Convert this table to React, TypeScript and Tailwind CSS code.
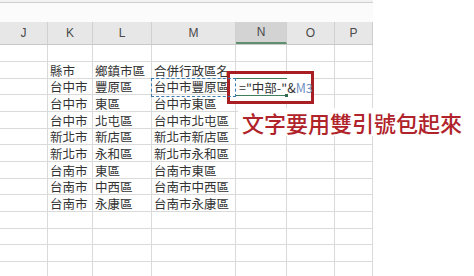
const cols = ["J", "K", "L", "M", "N", "O", "P"];
const colW = ["w-[48px]", "w-[45px]", "w-[59px]", "w-[84px]", "w-[51px]", "w-[48px]", "w-[38px]"];

const data: [string, string, string][] = [
  ["", "", ""],
  ["縣市", "鄉鎮市區", "合併行政區名"],
  ["台中市", "豐原區", "台中市豐原區"],
  ["台中市", "東區", "台中市東區"],
  ["台中市", "北屯區", "台中市北屯區"],
  ["新北市", "新店區", "新北市新店區"],
  ["新北市", "永和區", "新北市永和區"],
  ["台南市", "東區", "台南市東區"],
  ["台南市", "中西區", "台南市中西區"],
  ["台南市", "永康區", "台南市永康區"],
  ["", "", ""],
  ["", "", ""],
  ["", "", ""],
  ["", "", ""],
];

function Row({ cells, index }: { cells: [string, string, string]; index: number }) {
  const h = index % 3 === 2 ? "h-[16px]" : "h-[17px]";
  const values = ["", cells[0], cells[1], cells[2], "", "", ""];
  return (
    <div className={`flex ${h}`}>
      {values.map((v, i) => (
        <div
          key={i}
          className={`${colW[i]} shrink-0 flex items-end border-b border-r border-[#dadada] pl-[2px] text-[12.5px] leading-[15px] whitespace-nowrap text-[#333]`}
        >
          {v}
        </div>
      ))}
    </div>
  );
}

export default function App() {
  return (
    <div className="relative w-[474px] h-[276px] overflow-hidden bg-white font-['Noto_Sans_CJK_TC',sans-serif]">
      {/* top strip */}
      <div className="w-[373px] h-[2px] bg-[#f2f2f2]" />
      <div className="w-[373px] h-[1px] bg-[#cfcfcf]" />
      <div className="w-[373px] h-[19px] bg-[#fbfbfb]" />

      {/* column headers */}
      <div className="flex h-[23px] w-[373px] bg-[#e7e7e7] border-b border-[#c8c8c8] font-['Liberation_Sans',sans-serif] text-[12px] text-[#4a4a4a]">
        {cols.map((c, i) => (
          <div
            key={c}
            className={`${colW[i]} shrink-0 flex items-center justify-center border-r border-[#d0d0d0] ${
              c === "N" ? "bg-[#d3d3d3] border-b-2 border-b-[#5f8f6f]" : ""
            }`}
          >
            {c}
          </div>
        ))}
      </div>

      {/* grid */}
      <div className="w-[373px]">
        {data.map((r, i) => (
          <Row key={i} cells={r} index={i} />
        ))}
      </div>

      {/* red highlight box around formula */}
      <div className="absolute left-[227px] top-[71px] w-[87px] h-[33px] border-[3px] border-[#a81e22] bg-white" />

      {/* copy marquee on M3 */}
      <div className="absolute left-[151px] top-[78px] w-[85px] h-[19px] border border-dashed border-[#3b7bb0]" />

      {/* active cell edit lines */}
      <div className="absolute left-[236px] top-[78px] w-[51px] h-[18px] border-y border-[#3f7d5c]" />
      <div className="absolute left-[285px] top-[94px] w-[3px] h-[3px] bg-[#2f6b4c]" />

      {/* formula */}
      <div className="absolute left-[239px] top-[80px] text-[12.5px] leading-[15px] whitespace-nowrap text-[#333]">
        ="中部-"&amp;<span className="text-[#6f8fc2]">M3</span>
      </div>

      {/* caption */}
      <div className="absolute left-[238px] top-[108px] bg-white px-[4px] text-[22px] font-medium leading-[28px] text-[#b0232a]">
        文字要用雙引號包起來
      </div>
    </div>
  );
}
